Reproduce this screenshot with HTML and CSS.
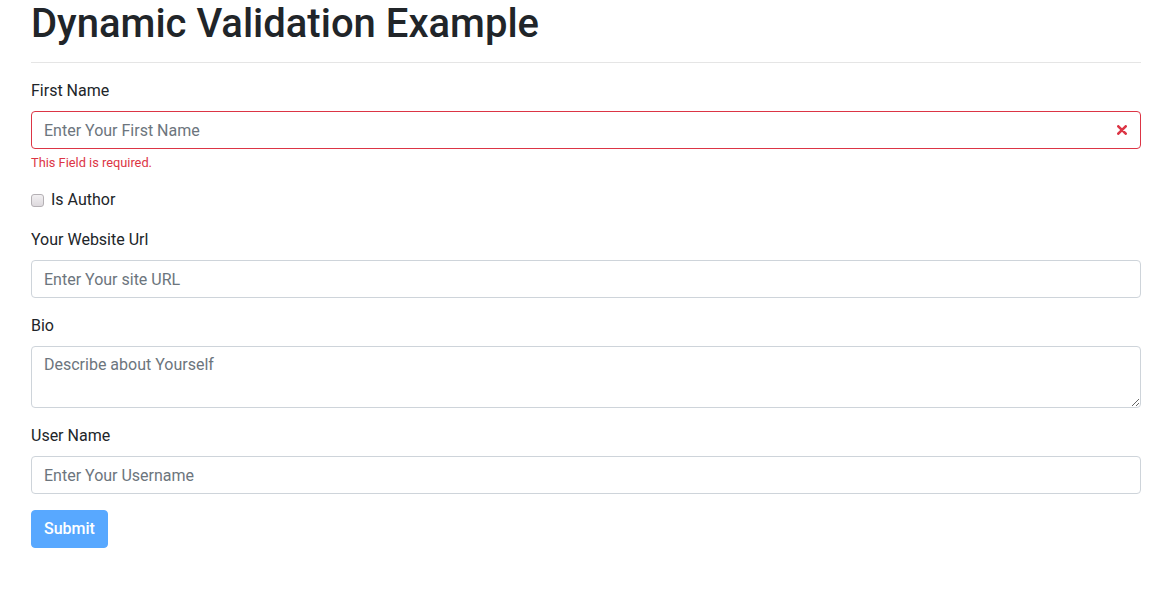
FILE: index.html
```html
<!DOCTYPE html>
<html lang="en">
<head>
<meta charset="utf-8">
<title>Dynamic Validation Example</title>
<link rel="stylesheet" href="styles.css">
</head>
<body>
<div class="container">
  <h1 class="title">Dynamic Validation Example</h1>
  <hr class="divider">
  <form class="form">
    <div class="form-group">
      <label class="label" for="firstName">First Name</label>
      <div class="input-wrap">
        <input class="form-control is-invalid" id="firstName" type="text" placeholder="Enter Your First Name">
        <svg class="invalid-icon" viewBox="0 0 10 10" width="10" height="10" aria-hidden="true">
          <path stroke="#dc3545" stroke-width="2.6" stroke-linecap="round" fill="none" d="M1.3 1.3l7.4 7.4M8.7 1.3L1.3 8.7"/>
        </svg>
      </div>
      <div class="invalid-feedback">This Field is required.</div>
    </div>
    <div class="form-group form-check">
      <input class="check-input" id="isAuthor" type="checkbox">
      <label class="check-label" for="isAuthor">Is Author</label>
    </div>
    <div class="form-group">
      <label class="label" for="site">Your Website Url</label>
      <input class="form-control" id="site" type="text" placeholder="Enter Your site URL">
    </div>
    <div class="form-group">
      <label class="label" for="bio">Bio</label>
      <textarea class="form-control textarea" id="bio" rows="2" placeholder="Describe about Yourself"></textarea>
    </div>
    <div class="form-group">
      <label class="label" for="user">User Name</label>
      <input class="form-control" id="user" type="text" placeholder="Enter Your Username">
    </div>
    <button class="btn" type="submit" disabled>Submit</button>
  </form>
</div>
</body>
</html>
```
FILE: styles.css
```css
* { box-sizing: border-box; }
html, body { margin: 0; padding: 0; background: #fff; }
body {
  font-family: Roboto, "Noto Sans", "Liberation Sans", sans-serif;
  font-size: 16px;
  line-height: 1.5;
  color: #212529;
}
.container {
  padding: 0 22px 0 31px;
}
.title {
  margin: 0;
  font-size: 40px;
  font-weight: 500;
  line-height: 48px;
  color: #212529;
}
.divider {
  margin: 14px 0 16px;
  border: 0;
  border-top: 1px solid rgba(0,0,0,.1);
  height: 0;
}
.form { margin: 0; }
.form-group { margin-bottom: 16px; }
.label {
  display: inline-block;
  margin-bottom: 8px;
  line-height: 24px;
}
.input-wrap { position: relative; }
.form-control {
  display: block;
  width: 100%;
  height: 38px;
  padding: 6px 12px;
  font-family: inherit;
  font-size: 16px;
  line-height: 1.5;
  color: #495057;
  background: #fff;
  border: 1px solid #ced4da;
  border-radius: 4px;
  margin: 0;
}
.form-control::placeholder { color: #6c757d; opacity: 1; }
.form-control.is-invalid {
  border-color: #dc3545;
  padding-right: 36px;
}
.textarea {
  height: 62px;
  resize: vertical;
  overflow: auto;
}
.invalid-icon {
  position: absolute;
  right: 14px;
  top: 14px;
}
.invalid-feedback {
  margin-top: 4px;
  font-size: 12.8px;
  line-height: 1.5;
  color: #dc3545;
}
.form-check {
  display: flex;
  align-items: center;
  min-height: 24px;
}
.check-input {
  -webkit-appearance: none;
  appearance: none;
  width: 13px;
  height: 13px;
  margin: 0 7px 0 0;
  border: 1px solid #b4b0b4;
  border-radius: 3px;
  background: linear-gradient(#f2f0f2, #ddd9dd);
}
.check-label { line-height: 24px; }
.btn {
  display: inline-block;
  height: 38px;
  padding: 6px 12px;
  font-family: inherit;
  font-size: 16px;
  line-height: 1.5;
  font-weight: 500;
  color: #fff;
  background: #007bff;
  border: 1px solid #007bff;
  border-radius: 4px;
  opacity: .65;
}
```
